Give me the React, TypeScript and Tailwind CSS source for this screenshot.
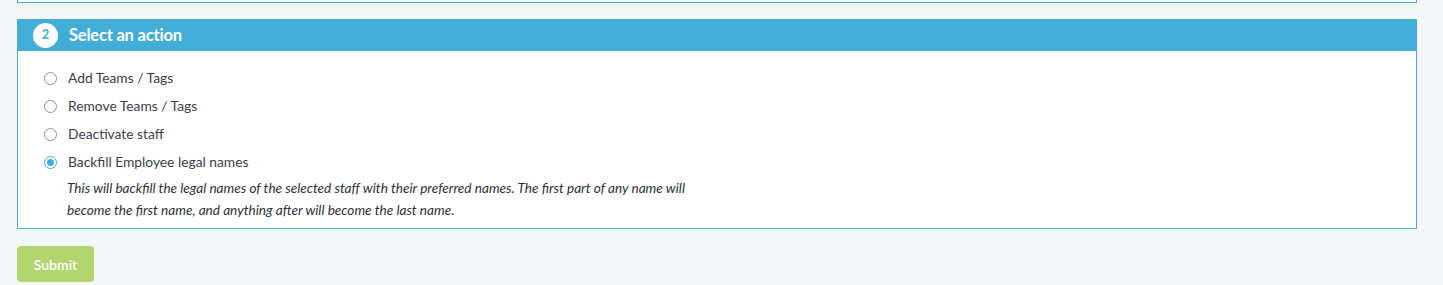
import React from "react";

const options = [
  "Add Teams / Tags",
  "Remove Teams / Tags",
  "Deactivate staff",
  "Backfill Employee legal names",
];

function Radio({ checked }: { checked: boolean }) {
  return (
    <span
      className={
        checked
          ? "flex h-[13px] w-[13px] shrink-0 items-center justify-center rounded-full border border-[#42aed8] bg-white"
          : "flex h-[13px] w-[13px] shrink-0 items-center justify-center rounded-full border border-[#8b9099] bg-white"
      }
    >
      {checked && <span className="h-[7px] w-[7px] rounded-full bg-[#42aed8]" />}
    </span>
  );
}

export default function App() {
  return (
    <div className="min-h-[285px] w-full bg-[#f5f6f8] pl-[17px] pr-[26px] font-['Lato',sans-serif]">
      <div className="h-[3px] border-x border-b border-[#42aed8] bg-white" />
      <div className="mt-[16px]">
        <div className="flex h-[32px] items-center bg-[#42aed8] pl-[16px]">
          <span className="flex h-[25px] w-[25px] items-center justify-center rounded-full bg-white text-[13px] font-bold text-[#42aed8]">
            2
          </span>
          <span className="ml-[11px] text-[16.5px] font-bold tracking-[-0.2px] text-white">
            Select an action
          </span>
        </div>
        <div className="border-x border-b border-[#42aed8] bg-white pb-[7px] pl-[26px] pt-[13px]">
          {options.map((o, i) => (
            <div key={o} className="flex h-[28px] items-center">
              <Radio checked={i === 3} />
              <span className="ml-[11px] text-[13.8px] text-[#3b404a]">{o}</span>
            </div>
          ))}
          <p className="mt-[1px] pl-[23px] text-[13.6px] italic leading-[22px] text-[#2d3038]">
            This will backfill the legal names of the selected staff with their preferred names. The first part of any name will
            <br />
            become the first name, and anything after will become the last name.
          </p>
        </div>
      </div>
      <button className="mt-[17px] h-[36px] w-[77px] rounded-[4px] bg-[#b3d56f] text-[14px] font-semibold text-white">
        Submit
      </button>
    </div>
  );
}
